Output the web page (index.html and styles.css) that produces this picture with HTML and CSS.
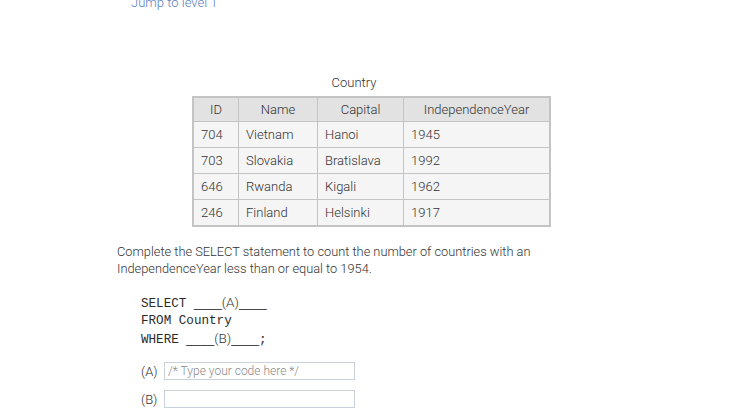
FILE: index.html
```html
<!DOCTYPE html>
<html>
<head>
<meta charset="utf-8">
<link rel="stylesheet" href="styles.css">
</head>
<body>
<div class="page">
  <a class="jump" href="#">Jump to level 1</a>
  <div class="figure">
    <div class="caption">Country</div>
    <table class="data">
      <thead>
        <tr><th class="c-id">ID</th><th class="c-name">Name</th><th class="c-cap">Capital</th><th class="c-year">IndependenceYear</th></tr>
      </thead>
      <tbody>
        <tr><td>704</td><td>Vietnam</td><td>Hanoi</td><td>1945</td></tr>
        <tr><td>703</td><td>Slovakia</td><td>Bratislava</td><td>1992</td></tr>
        <tr><td>646</td><td>Rwanda</td><td>Kigali</td><td>1962</td></tr>
        <tr><td>246</td><td>Finland</td><td>Helsinki</td><td>1917</td></tr>
      </tbody>
    </table>
  </div>
  <p class="prompt">Complete the SELECT statement to count the number of countries with an IndependenceYear less than or equal to 1954.</p>
  <div class="code">
    <div class="line"><span class="kw">SELECT </span><span class="blank"><span class="rule">____</span>(A)<span class="rule">____</span></span></div>
    <div class="line"><span class="kw">FROM Country</span></div>
    <div class="line"><span class="kw">WHERE </span><span class="blank"><span class="rule">____</span>(B)<span class="rule">____</span></span><span class="kw">;</span></div>
  </div>
  <div class="answers">
    <label class="answer"><span class="tag">(A)</span><input class="field" type="text" placeholder="/* Type your code here */"></label>
    <label class="answer"><span class="tag">(B)</span><input class="field" type="text"></label>
  </div>
</div>
</body>
</html>
```

FILE: styles.css
```css
html, body {
  margin: 0;
  padding: 0;
  background: #ffffff;
}
body {
  font-family: Roboto, "Liberation Sans", sans-serif;
  font-weight: 300;
  color: #333333;
  font-size: 13px;
}
.page {
  padding-left: 117px;
  display: flex;
  flex-direction: column;
  align-items: flex-start;
}
.jump {
  margin-left: 14px;
  margin-top: -5px;
  color: #5a80bf;
  text-decoration: none;
  font-size: 13px;
  line-height: 16px;
}
.figure {
  margin-top: 64px;
  margin-left: 75px;
  display: flex;
  flex-direction: column;
}
.caption {
  width: 324px;
  text-align: center;
  font-size: 13px;
  line-height: 16px;
  margin-bottom: 5px;
}
.data {
  border-collapse: collapse;
  border: 2px solid #c4c4c4;
  font-size: 13px;
}
.data th, .data td {
  border: 1px solid #c4c4c4;
  padding: 0 7px;
  text-align: left;
  font-weight: 300;
}
.data th {
  background: #e2e2e2;
  text-align: center;
  height: 23px;
}
.data td {
  background: #f5f5f5;
  height: 25px;
}
.c-id { width: 30px; }
.c-name { width: 64px; }
.c-cap { width: 71px; }
.c-year { width: 131px; }
.prompt {
  margin: 16px 0 0 0;
  width: 430px;
  line-height: 17px;
  font-size: 12.8px;
}
.code {
  margin: 16px 0 0 24px;
  display: flex;
  flex-direction: column;
}
.line {
  line-height: 18px;
  height: 18px;
}
.kw {
  font-family: "Liberation Mono", monospace;
  font-size: 12.6px;
  color: #2a2a2a;
}
.blank {
  font-size: 13.5px;
}
.rule {
  font-family: "Liberation Sans", Arial, sans-serif;
  font-size: 12.5px;
}
.answers {
  margin: 15px 0 0 24px;
  display: flex;
  flex-direction: column;
  gap: 10px;
}
.answer {
  display: flex;
  align-items: center;
  gap: 7px;
}
.tag {
  width: 16px;
  font-size: 13px;
}
.field {
  box-sizing: border-box;
  width: 191px;
  height: 18px;
  border: 1px solid #c9d2da;
  padding: 0 3px;
  font-family: Roboto, "Liberation Sans", sans-serif;
  font-weight: 300;
  font-size: 12px;
  color: #333;
  outline: none;
}
.field::placeholder {
  color: #8a8a8a;
}
```
